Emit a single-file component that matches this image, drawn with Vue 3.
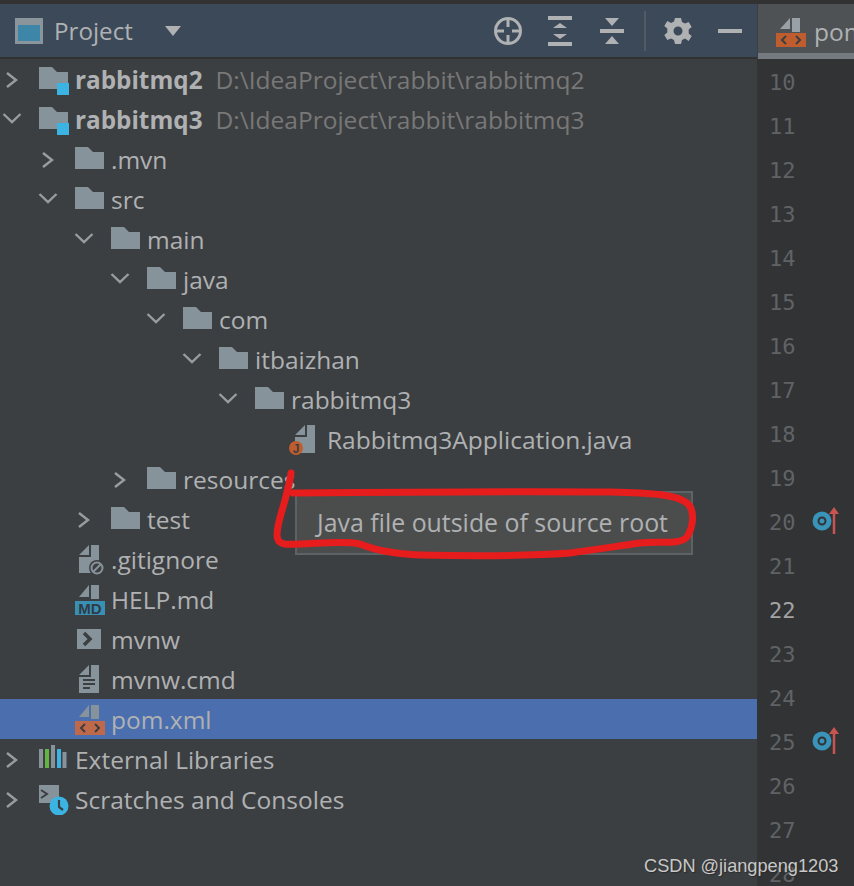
<script setup>
const rows = [
  { d: 0, arrow: 'closed', icon: 'module', name: 'rabbitmq2', bold: true, path: 'D:\\IdeaProject\\rabbit\\rabbitmq2' },
  { d: 0, arrow: 'open', icon: 'module', name: 'rabbitmq3', bold: true, path: 'D:\\IdeaProject\\rabbit\\rabbitmq3' },
  { d: 1, arrow: 'closed', icon: 'folder', name: '.mvn' },
  { d: 1, arrow: 'open', icon: 'folder', name: 'src' },
  { d: 2, arrow: 'open', icon: 'folder', name: 'main' },
  { d: 3, arrow: 'open', icon: 'folder', name: 'java' },
  { d: 4, arrow: 'open', icon: 'folder', name: 'com' },
  { d: 5, arrow: 'open', icon: 'folder', name: 'itbaizhan' },
  { d: 6, arrow: 'open', icon: 'folder', name: 'rabbitmq3' },
  { d: 7, icon: 'java', name: 'Rabbitmq3Application.java' },
  { d: 3, arrow: 'closed', icon: 'folder', name: 'resources' },
  { d: 2, arrow: 'closed', icon: 'folder', name: 'test' },
  { d: 1, icon: 'ignore', name: '.gitignore' },
  { d: 1, icon: 'md', name: 'HELP.md' },
  { d: 1, icon: 'shell', name: 'mvnw' },
  { d: 1, icon: 'text', name: 'mvnw.cmd' },
  { d: 1, icon: 'xml', name: 'pom.xml', selected: true },
  { d: 0, arrow: 'closed', icon: 'libs', name: 'External Libraries' },
  { d: 0, arrow: 'closed', icon: 'scratch', name: 'Scratches and Consoles' }
]
const lines = Array.from({ length: 19 }, (_, i) => 10 + i)
const marked = [20, 25]
</script>

<template>
  <div class="screen">
    <div class="topline"></div>
    <div class="main">
      <section class="panel">
        <header class="toolbar">
          <svg class="tool-window" width="28" height="26" viewBox="0 0 28 26">
            <rect x="0" y="0" width="28" height="26" fill="#8a949b" />
            <rect x="3" y="7" width="22" height="16" fill="#3e86a8" />
          </svg>
          <span class="title">Project</span>
          <svg class="caret" width="16" height="10" viewBox="0 0 16 10"><path d="M0 0h16l-8 10z" fill="#afb1b3" /></svg>
          <div class="actions">
            <svg width="32" height="32" viewBox="0 0 32 32" fill="none" stroke="#afb1b3" stroke-width="3">
              <circle cx="16" cy="16" r="12.5" />
              <path d="M16 3v9M16 20v9M3 16h9M20 16h9" />
            </svg>
            <svg width="32" height="32" viewBox="0 0 32 32" fill="#afb1b3">
              <rect x="4" y="1" width="24" height="4" />
              <rect x="4" y="27" width="24" height="4" />
              <path d="M16 8l7 5H9zM16 24l7-5H9z" />
            </svg>
            <svg width="32" height="32" viewBox="0 0 32 32" fill="#afb1b3">
              <rect x="4" y="14" width="24" height="4" />
              <path d="M9 3h14l-7 8zM9 29h14l-7-8z" />
            </svg>
            <span class="divider"></span>
            <svg width="28" height="28" viewBox="0 0 28 28" fill="#afb1b3">
              <path fill-rule="evenodd" d="M11 1h6l1 4 3 1.500 3.700-1.500 3 5-3 2.600v3.800l3 2.600-3 5L21 21.500 18 23l-1 4h-6l-1-4-3-1.500L3.300 23l-3-5 3-2.600v-3.800l-3-2.600 3-5L7 6l3-1.500zM14 9.500a4.500 4.500 0 1 0 0 9 4.500 4.500 0 0 0 0-9z" />
            </svg>
            <span class="minus"></span>
          </div>
        </header>

        <div class="tree">
          <div v-for="row in rows" :key="row.name + row.d" class="row" :class="{ selected: row.selected }" :style="{ paddingLeft: row.d * 36 + 'px' }">
            <span class="arrow">
              <svg v-if="row.arrow === 'closed'" width="36" height="40" viewBox="0 0 36 40" fill="none" stroke="#9a9c9e" stroke-width="2.400"><path d="M7 14l9 7-9 7" /></svg>
              <svg v-else-if="row.arrow === 'open'" width="36" height="40" viewBox="0 0 36 40" fill="none" stroke="#9a9c9e" stroke-width="2.400"><path d="M3.500 15l8.500 8 8.500-8" /></svg>
            </span>
            <svg class="icon" width="36" height="32" viewBox="0 0 36 32">
              <template v-if="row.icon === 'folder' || row.icon === 'module'">
                <path d="M3 4h13l5 5h11v17H3z" fill="#87939a" />
                <rect v-if="row.icon === 'module'" x="21" y="20" width="12" height="12" fill="#3bb4e4" />
              </template>
              <template v-else-if="row.icon === 'java'">
                <path d="M7 12L17 2v10zM19 2h8v28H7V14h12z" fill="#87939a" />
                <circle cx="8" cy="25" r="7" fill="#c05d2e" />
                <text x="8" y="29.500" class="badge-j">J</text>
              </template>
              <template v-else-if="row.icon === 'ignore'">
                <path d="M7 12L17 2v10zM19 2h8v28H7V14h12z" fill="#87939a" />
                <circle cx="25" cy="25" r="8" fill="#3c3f41" />
                <circle cx="25" cy="25" r="5.500" fill="none" stroke="#87939a" stroke-width="2" />
                <path d="M21 29l8-8" stroke="#87939a" stroke-width="2" />
              </template>
              <template v-else-if="row.icon === 'md'">
                <path d="M7 14L17 2v12zM19 2h8v14H7h12z" fill="#87939a" />
                <rect x="3" y="18" width="30" height="14" fill="#3a8fb5" />
                <text x="18" y="30.500" class="badge-md">MD</text>
              </template>
              <template v-else-if="row.icon === 'xml'">
                <path d="M7 14L17 2v12zM19 2h8v14H7h12z" fill="#87939a" />
                <rect x="3" y="18" width="30" height="14" :fill="row.selected ? '#c0684a' : '#c05d2e'" />
                <path d="M13 21l-4 4 4 4M23 21l4 4-4 4" fill="none" stroke="#3c3f41" stroke-width="2" />
              </template>
              <template v-else-if="row.icon === 'shell'">
                <rect x="5" y="6" width="24" height="20" fill="#87939a" />
                <path d="M12 10l6 6-6 6" fill="none" stroke="#3c3f41" stroke-width="3.500" />
              </template>
              <template v-else-if="row.icon === 'text'">
                <path d="M7 12L17 2v10zM19 2h8v28H7V14h12z" fill="#87939a" />
                <path d="M11 17h12M11 21h12M11 25h7" stroke="#3c3f41" stroke-width="2" />
              </template>
              <template v-else-if="row.icon === 'libs'">
                <rect x="3" y="6" width="4" height="19" fill="#87939a" />
                <rect x="9" y="6" width="4" height="19" fill="#62b543" />
                <rect x="15" y="2" width="4" height="23" fill="#87939a" />
                <rect x="21" y="6" width="4" height="19" fill="#3bb4e4" />
                <rect x="26.500" y="9" width="4" height="16" fill="#87939a" />
              </template>
              <template v-else-if="row.icon === 'scratch'">
                <rect x="3" y="2" width="20" height="18" fill="#87939a" />
                <path d="M5 7l6 4-6 4" fill="none" stroke="#3c3f41" stroke-width="2" />
                <circle cx="23" cy="23" r="9.500" fill="#3bb4e4" />
                <path d="M23 17v7l4 3" fill="none" stroke="#3c3f41" stroke-width="2.200" />
              </template>
            </svg>
            <span class="name" :class="{ bold: row.bold }">{{ row.name }}</span>
            <span v-if="row.path" class="path">{{ row.path }}</span>
          </div>
        </div>

        <div class="tooltip">Java file outside of source root</div>
      </section>

      <section class="editor">
        <div class="tabbar">
          <div class="tab">
            <svg class="tab-icon" width="32" height="32" viewBox="0 0 32 32">
              <path d="M5 13L15 2v11zM17 2h8v14H5h12z" fill="#9aa1a6" />
              <rect x="1" y="17" width="30" height="14" fill="#c05d2e" />
              <path d="M11 20l-4 4 4 4M21 20l4 4-4 4" fill="none" stroke="#3c3f41" stroke-width="2" />
            </svg>
            <span class="tab-name">pom.xml</span>
          </div>
        </div>
        <div class="gutter">
          <div v-for="n in lines" :key="n" class="line" :class="{ current: n === 22 }">
            <span class="num">{{ n }}</span>
            <svg v-if="marked.includes(n)" class="marker" width="28" height="30" viewBox="0 0 28 30">
              <circle cx="10" cy="14" r="9.500" fill="#3a93b8" />
              <circle cx="10" cy="14" r="3.500" fill="none" stroke="#313335" stroke-width="2" />
              <path d="M22 27V6" stroke="#c75450" stroke-width="2.500" />
              <path d="M17 7l5-7 5 7z" fill="#c75450" />
            </svg>
          </div>
        </div>
      </section>
    </div>

    <svg class="scribble" width="854" height="886" viewBox="0 0 854 886" fill="none">
      <path d="M291 473C290 482 287 492 285 500C281 515 277 525 277 535C277 545 285 545 300 544C325 543 345 541 360 544C375 550 395 554 420 555C470 556 530 556 570 553C600 549 625 545 640 543C660 541 680 545 687 537C694 525 695 510 687 503C675 494 650 493 610 492C520 491 400 492 293 493" stroke="#e71c1c" stroke-width="7" stroke-linecap="round" stroke-linejoin="round" />
    </svg>
    <div class="watermark">CSDN @jiangpeng1203</div>
  </div>
</template>

<style>
html, body { margin: 0; background: #3c3f41; }
</style>

<style scoped>
.screen {
  position: relative;
  width: 854px;
  height: 886px;
  overflow: hidden;
  background: #3c3f41;
  font-family: "Open Sans", "Noto Sans", sans-serif;
  color: #afb1b3;
}
.topline { height: 4px; background: #323232; }
.main { display: flex; height: 882px; }
.panel { position: relative; width: 757px; flex: none; background: #3c3f41; }
.toolbar {
  display: flex;
  align-items: center;
  height: 53px;
  padding-left: 15px;
  box-sizing: border-box;
  background: #3c4959;
  box-shadow: 0 2px 0 #323232;
  margin-bottom: 2px;
}
.title { margin-left: 11px; font-size: 24.200px; color: #afb1b3; }
.caret { margin-left: 32px; }
.actions { display: flex; align-items: center; margin-left: auto; margin-right: 15px; }
.actions svg { margin-left: 20px; }
.divider { width: 2px; height: 40px; background: #525a64; margin-left: 16px; margin-right: -2px; }
.minus { width: 24px; height: 4px; background: #afb1b3; margin-left: 26px; }
.tree { display: flex; flex-direction: column; }
.row {
  display: flex;
  align-items: center;
  height: 40px;
  box-sizing: border-box;
  white-space: nowrap;
  font-size: 24.500px;
}
.row.selected { background: #4b6eaf; }
.arrow { width: 36px; height: 40px; flex: none; }
.arrow svg { display: block; }
.icon { flex: none; margin-right: 3px; }
.name { color: #afb1b3; }
.name.bold { font-weight: 700; font-size: 24.300px; }
.path { margin-left: 13px; color: #787878; }
.badge-j { font: 700 12px "Liberation Sans", sans-serif; fill: #3c3f41; text-anchor: middle; }
.badge-md { font: 700 15px "Liberation Sans", sans-serif; fill: #2f3c45; text-anchor: middle; }
.tooltip {
  position: absolute;
  left: 295px;
  top: 487px;
  width: 398px;
  height: 64px;
  box-sizing: border-box;
  padding: 0 20px 2px;
  display: flex;
  align-items: center;
  background: #4b4d4d;
  border: 2px solid #5f6265;
  font-size: 24.900px;
  color: #afb1b3;
  white-space: nowrap;
}
.editor { flex: 1; min-width: 0; background: #313335; }
.tabbar { height: 55px; background: #3c3f41; box-sizing: border-box; padding-left: 1px; }
.tab {
  display: flex;
  align-items: center;
  height: 55px;
  padding: 6px 0 0 17px;
  box-sizing: border-box;
  background: #4e5254;
  border-bottom: 6px solid #747a80;
  overflow: hidden;
}
.tab-icon { flex: none; }
.tab-name { margin-left: 7px; font-size: 24.500px; color: #afb1b3; white-space: nowrap; }
.gutter { padding-top: 1px; }
.line {
  display: flex;
  align-items: center;
  height: 44px;
  padding-left: 12px;
  font-family: "DejaVu Sans Mono", monospace;
  font-size: 22px;
  color: #606366;
}
.line.current { color: #a4a3a3; }
.marker { margin-left: 16px; flex: none; }
.scribble { position: absolute; left: 0; top: 0; pointer-events: none; }
.watermark {
  position: absolute;
  left: 644px;
  top: 856px;
  font-family: "Liberation Sans", sans-serif;
  font-size: 18.200px;
  color: #c8c8c8;
  text-shadow: 1px 1px 1px #2b2b2b;
  white-space: nowrap;
}
</style>
